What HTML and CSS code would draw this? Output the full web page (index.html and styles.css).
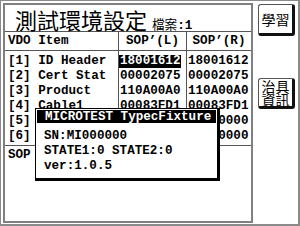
FILE: index.html
```html
<!DOCTYPE html>
<html>
<head>
<meta charset="utf-8">
<link rel="stylesheet" href="styles.css">
</head>
<body>
<div class="screen">
  <div class="panel">
    <div class="title-row">
      <span class="title">測試環境設定</span>
      <span class="file">檔案<span class="mono">:1</span></span>
    </div>
    <div class="grid">
      <div class="h c1">VDO Item</div><div class="h c2 ctr">SOP’(L)</div><div class="h c3 ctr">SOP’(R)</div>
      <div class="c c1 first">[1] ID Header</div><div class="c c2 first"><span class="sel">18001612</span></div><div class="c c3 first">18001612</div>
      <div class="c c1">[2] Cert Stat</div><div class="c c2">00002075</div><div class="c c3">00002075</div>
      <div class="c c1">[3] Product</div><div class="c c2">110A00A0</div><div class="c c3">110A00A0</div>
      <div class="c c1">[4] Cable1</div><div class="c c2">00083FD1</div><div class="c c3">00083FD1</div>
      <div class="c c1">[5] Cable2</div><div class="c c2">00000000</div><div class="c c3">00000000</div>
      <div class="c c1 last">[6] Cable3</div><div class="c c2 last">00000000</div><div class="c c3 last">00000000</div>
    </div>
    <div class="sop">SOP</div>
    <div class="popup">
      <div class="pop-title">MICROTEST TypecFixture</div>
      <div class="pop-body">
        <div class="pl">SN:MI000000</div>
        <div class="pl">STATE1:0 STATE2:0</div>
        <div class="pl">ver:1.0.5</div>
      </div>
    </div>
  </div>
  <div class="side">
    <div class="btn b1">學習</div>
    <div class="btn b2"><span class="bl">治具</span><span class="bl">資訊</span></div>
  </div>
</div>
</body>
</html>
```
FILE: styles.css
```css
html, body {
  margin: 0;
  padding: 0;
  background: #fff;
}
.screen {
  box-sizing: border-box;
  width: 300px;
  height: 226px;
  border-style: solid;
  border-color: #8a8a8a;
  border-width: 1px 2px 2px 1px;
  padding: 2px 0 1px 2px;
  display: flex;
  background: #fff;
  font-family: "Liberation Mono", monospace;
  font-weight: bold;
  font-size: 12.6px;
  color: #000;
  overflow: hidden;
}
.panel {
  position: relative;
  box-sizing: border-box;
  width: 250px;
  height: 220px;
  flex: none;
  border: 2px solid #808080;
  display: flex;
  flex-direction: column;
}
.title-row {
  box-sizing: border-box;
  height: 27px;
  padding-top: 2px;
  border-bottom: 1px solid #555;
  display: flex;
  align-items: baseline;
  padding-left: 10px;
  line-height: 24px;
}
.title {
  font-family: "Noto Sans CJK TC", "Noto Sans CJK SC", sans-serif;
  font-weight: normal;
  font-size: 22px;
}
.file {
  font-family: "Noto Sans CJK TC", "Noto Sans CJK SC", sans-serif;
  font-weight: normal;
  font-size: 12.6px;
  margin-left: 5px;
}
.mono {
  font-family: "Liberation Mono", monospace;
  font-weight: bold;
}
.grid {
  display: grid;
  grid-template-columns: 114px 68px 1fr;
  white-space: nowrap;
}
.h {
  height: 18px;
  line-height: 18px;
  border-bottom: 1px solid #555;
}
.c {
  height: 15px;
  line-height: 15px;
  overflow: hidden;
}
.c1 {
  border-right: 1px solid #555;
  padding-left: 3px;
}
.c2 {
  border-right: 1px solid #555;
  padding-left: 1px;
}
.c3 {
  padding-left: 1px;
}
.ctr {
  text-align: center;
  padding-left: 0;
}
.first {
  padding-top: 3px;
}
.last {
  padding-bottom: 1px;
  border-bottom: 1px solid #555;
}
.sel {
  background: #000;
  color: #fff;
  margin-left: -1px;
  padding: 0 1px;
  display: inline-block;
  line-height: 13px;
}
.sop {
  padding-left: 3px;
  height: 16px;
  line-height: 16px;
  margin-top: 1px;
}
.popup {
  position: absolute;
  left: 30px;
  top: 103px;
  box-sizing: border-box;
  width: 185px;
  height: 73px;
  background: #fff;
  border-style: solid;
  border-color: #000;
  border-width: 1px 3px 3px 1px;
  padding: 1px 1px 0 1px;
  z-index: 2;
}
.pop-title {
  background: #000;
  color: #fff;
  height: 13px;
  line-height: 14px;
  padding-left: 8px;
  white-space: nowrap;
}
.pop-body {
  padding: 6px 0 0 7px;
  line-height: 15px;
}
.pl {
  white-space: nowrap;
  height: 15px;
}
.side {
  display: flex;
  flex-direction: column;
  padding-left: 5px;
}
.btn {
  box-sizing: border-box;
  width: 37px;
  border-style: solid;
  border-color: #555 #111 #111 #555;
  border-width: 1px 3px 3px 1px;
  border-radius: 3px;
  font-family: "Noto Sans CJK TC", "Noto Sans CJK SC", sans-serif;
  font-weight: normal;
  font-size: 14px;
  text-align: center;
  display: flex;
  flex-direction: column;
  align-items: center;
  justify-content: center;
}
.b1 {
  margin-top: 1px;
  height: 32px;
}
.b2 {
  margin-top: 42px;
  height: 31px;
}
.bl {
  display: block;
  height: 13px;
  line-height: 13px;
  white-space: nowrap;
}
```
